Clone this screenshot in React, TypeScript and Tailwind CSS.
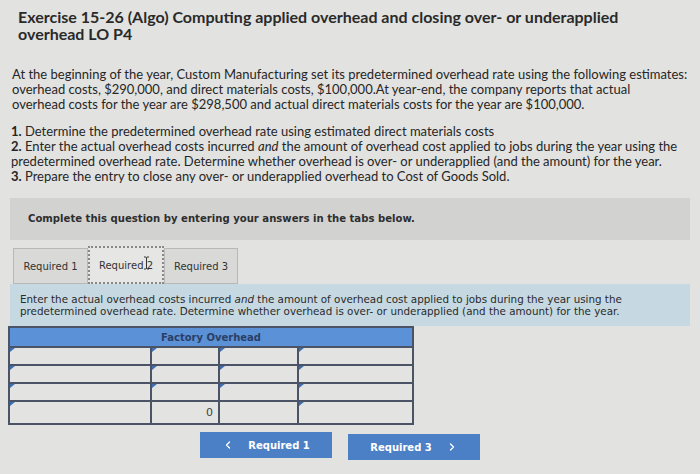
import { ChevronLeft, ChevronRight } from 'lucide-react'

const body = { fontFamily: 'Lato, "Open Sans", sans-serif' }
const verdana = { fontFamily: '"DejaVu Sans", Verdana, sans-serif' }

function Cell({ marker = true, value }: { marker?: boolean; value?: string }) {
    return (
        <div className="relative flex items-center justify-end bg-[#e3e3e2] pr-[5px]">
            {marker && (
                <span className="absolute left-0 top-0 h-0 w-0 border-b-[4px] border-l-[5px] border-b-transparent border-l-[#3d6fb0]" />
            )}
            {value && <span className="text-[11px] leading-none text-[#444]">{value}</span>}
        </div>
    )
}

export default function App() {
    return (
        <div className="min-h-[474px] w-[700px] overflow-hidden bg-[#e2e2e0] text-[#262626]">
            <h1 className="px-[18px] pt-[8px] text-[16px] font-bold leading-[17px] text-[#2a2a2a]" style={body}>
                Exercise 15-26 (Algo) Computing applied overhead and closing over- or underapplied
                <br />
                overhead LO P4
            </h1>

            <p className="mt-[25px] whitespace-nowrap px-[12px] text-[13px] leading-[15px]" style={body}>
                At the beginning of the year, Custom Manufacturing set its predetermined overhead rate using the following estimates:
                <br />
                overhead costs, $290,000, and direct materials costs, $100,000.At year-end, the company reports that actual
                <br />
                overhead costs for the year are $298,500 and actual direct materials costs for the year are $100,000.
            </p>

            <div className="mt-[12px] whitespace-nowrap px-[11px] text-[13px] leading-[15px]" style={body}>
                <p><span className="font-bold">1.</span> Determine the predetermined overhead rate using estimated direct materials costs</p>
                <p>
                    <span className="font-bold">2.</span> Enter the actual overhead costs incurred <i>and</i> the amount of overhead cost applied to jobs during the year using the
                    <br />
                    predetermined overhead rate. Determine whether overhead is over- or underapplied (and the amount) for the year.
                </p>
                <p><span className="font-bold">3.</span> Prepare the entry to close any over- or underapplied overhead to Cost of Goods Sold.</p>
            </div>

            <div className="mx-[10px] mt-[14px] flex h-[42px] items-center bg-[#d2d2d1] px-[18px]">
                <span className="text-[10.1px] font-bold text-[#2e2e2e]" style={verdana}>
                    Complete this question by entering your answers in the tabs below.
                </span>
            </div>

            <div className="ml-[13px] mt-[6px] flex items-end" style={verdana}>
                <div className="flex h-[36px] w-[75px] items-center justify-center border border-[#b8b8b8] bg-[#d9d9d8] text-[10px] text-[#333]">
                    Required 1
                </div>
                <div className="relative flex h-[38px] w-[76px] items-center justify-center border-2 border-dotted border-[#888] bg-[#e6e6e4] text-[10px] text-[#333]">
                    Required 2
                    <svg className="absolute left-[53px] top-[8px]" width="7" height="14" viewBox="0 0 7 14">
                        <path d="M1 1h2l.5.5L4 1h2M3.5 1.5v11M1 13h2l.5-.5.5.5h2" fill="none" stroke="#333" strokeWidth="1" />
                    </svg>
                </div>
                <div className="flex h-[36px] w-[74px] items-center justify-center border border-[#b8b8b8] bg-[#d9d9d8] text-[10px] text-[#333]">
                    Required 3
                </div>
            </div>

            <div className="mx-[10px] flex h-[42px] flex-col justify-center bg-[#c6d9e2] px-[10px] text-[10.35px] leading-[12px] text-[#2a2a2a]" style={verdana}>
                <p className="whitespace-nowrap">
                    Enter the actual overhead costs incurred <i>and</i> the amount of overhead cost applied to jobs during the year using the
                    <br />
                    predetermined overhead rate. Determine whether overhead is over- or underapplied (and the amount) for the year.
                </p>
            </div>

            <div
                className="ml-[8px] grid w-[406px] grid-cols-[140px_66px_77px_113px] grid-rows-[18px_16px_16px_16px_21px] gap-[2px] bg-[#4b5466] p-[2px]"
                style={verdana}
            >
                <div className="col-span-4 flex items-center justify-center bg-[#5b91d6] text-[10px] font-bold text-[#2b3f66]">
                    Factory Overhead
                </div>
                {[0, 1, 2].map((r) => (
                    <>
                        <Cell key={`a${r}`} />
                        <Cell key={`b${r}`} />
                        <Cell key={`c${r}`} />
                        <Cell key={`d${r}`} />
                    </>
                ))}
                <Cell />
                <Cell marker={false} value="0" />
                <Cell marker={false} />
                <Cell />
            </div>

            <div className="mt-[7px] flex gap-[16px] pl-[200px]" style={verdana}>
                <button className="flex h-[26px] w-[132px] items-center justify-center gap-[14px] bg-[#4c80c6] text-[10px] font-bold text-white">
                    <ChevronLeft size={12} strokeWidth={2.5} />
                    Required 1
                </button>
                <button className="mt-[2px] flex h-[26px] w-[132px] items-center justify-center gap-[14px] bg-[#4c80c6] text-[10px] font-bold text-white">
                    Required 3
                    <ChevronRight size={12} strokeWidth={2.5} />
                </button>
            </div>
        </div>
    )
}
